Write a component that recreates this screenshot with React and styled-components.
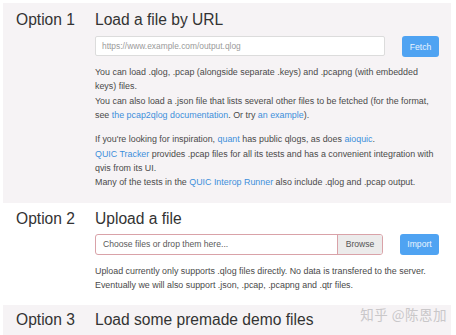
import React from "react";
import styled, { createGlobalStyle } from "styled-components";

const GlobalStyle = createGlobalStyle`
  html, body {
    margin: 0;
    padding: 0;
    background: #ffffff;
  }
  body {
    font-family: "Liberation Sans", Arial, sans-serif;
    color: #444;
  }
`;

const Page = styled.div`
  position: relative;
  width: 456px;
  height: 335px;
  overflow: hidden;
  padding: 3px 5px 0 3px;
  box-sizing: border-box;
  display: flex;
  flex-direction: column;
  gap: 1px;
`;

const Section = styled.section`
  display: grid;
  grid-template-columns: 92px 1fr;
  background: ${(p) => (p.$shaded ? "#f6f3f5" : "#ffffff")};
  padding: ${(p) => p.$pad || "8px 12px 13px 0"};
`;

const Label = styled.div`
  font-size: 15.6px;
  line-height: 18px;
  color: #333;
  padding-left: 13px;
  white-space: nowrap;
`;

const Body = styled.div`
  min-width: 0;
`;

const Title = styled.h3`
  margin: 0;
  font-size: 15.6px;
  line-height: 18px;
  font-weight: 400;
  color: #333;
  white-space: nowrap;
`;

const InputRow = styled.div`
  display: flex;
  gap: 17px;
  margin-top: ${(p) => p.$top || "7px"};
`;

const TextInput = styled.div`
  flex: 1;
  height: 20px;
  box-sizing: border-box;
  border: 1px solid #dcdcdc;
  border-radius: 2px;
  background: #fff;
  padding-left: 6px;
  display: flex;
  align-items: center;
  font-size: 8.4px;
  color: #9a9a9a;
`;

const FileInput = styled.div`
  flex: 1;
  height: 21px;
  box-sizing: border-box;
  border: 1px solid #d9a2a8;
  border-radius: 3px;
  background: #fff;
  display: flex;
  overflow: hidden;
`;

const FileText = styled.div`
  flex: 1;
  display: flex;
  align-items: center;
  padding-left: 7px;
  font-size: 8.6px;
  color: #5a5a5a;
`;

const BrowseBox = styled.div`
  width: 44px;
  border-left: 1px solid #d9a2a8;
  background: #ecebeb;
  display: flex;
  align-items: center;
  justify-content: center;
  font-size: 8.6px;
  color: #555;
`;

const Button = styled.div`
  width: ${(p) => p.$w || "37px"};
  height: 21px;
  border-radius: 3px;
  background: #4fa3f2;
  color: #eaf4ff;
  font-size: 8.6px;
  display: flex;
  align-items: center;
  justify-content: center;
`;

const Text = styled.p`
  margin: ${(p) => p.$top || "8px"} 0 0;
  font-size: 8.9px;
  line-height: 14.4px;
  color: #4a4a4a;
  & + & {
    margin-top: 9.6px;
  }
`;

const Link = styled.a`
  color: #3d8fdb;
  text-decoration: none;
`;

const Watermark = styled.div`
  position: absolute;
  right: 9px;
  bottom: 11px;
  font-family: "Noto Sans CJK SC", "Liberation Sans", sans-serif;
  font-size: 13.5px;
  color: #c9c7c9;
  letter-spacing: 0.5px;
`;

export default function App() {
  return (
    <>
      <GlobalStyle />
      <Page>
        <Section $shaded>
          <Label>Option 1</Label>
          <Body>
            <Title>Load a file by URL</Title>
            <InputRow>
              <TextInput>https://www.example.com/output.qlog</TextInput>
              <Button>Fetch</Button>
            </InputRow>
            <Text>
              You can load .qlog, .pcap (alongside separate .keys) and .pcapng
              (with embedded keys) files.
              <br />
              You can also load a .json file that lists several other files to
              be fetched (for the format, see{" "}
              <Link>the pcap2qlog documentation</Link>. Or try{" "}
              <Link>an example</Link>).
            </Text>
            <Text>
              If you're looking for inspiration, <Link>quant</Link> has public
              qlogs, as does <Link>aioquic</Link>.
              <br />
              <Link>QUIC Tracker</Link> provides .pcap files for all its tests
              and has a convenient integration with qvis from its UI.
              <br />
              Many of the tests in the <Link>QUIC Interop Runner</Link> also
              include .qlog and .pcap output.
            </Text>
          </Body>
        </Section>

        <Section $pad="6px 12px 11px 0">
          <Label>Option 2</Label>
          <Body>
            <Title>Upload a file</Title>
            <InputRow $top="6px">
              <FileInput>
                <FileText>Choose files or drop them here...</FileText>
                <BrowseBox>Browse</BrowseBox>
              </FileInput>
              <Button $w="39px">Import</Button>
            </InputRow>
            <Text $top="9px">
              Upload currently only supports .qlog files directly. No data is
              transfered to the server.
              <br />
              Eventually we will also support .json, .pcap, .pcapng and .qtr
              files.
            </Text>
          </Body>
        </Section>

        <Section $shaded $pad="6px 12px 6px 0">
          <Label>Option 3</Label>
          <Body>
            <Title>Load some premade demo files</Title>
          </Body>
        </Section>

        <Watermark>知乎 @陈恩加</Watermark>
      </Page>
    </>
  );
}
